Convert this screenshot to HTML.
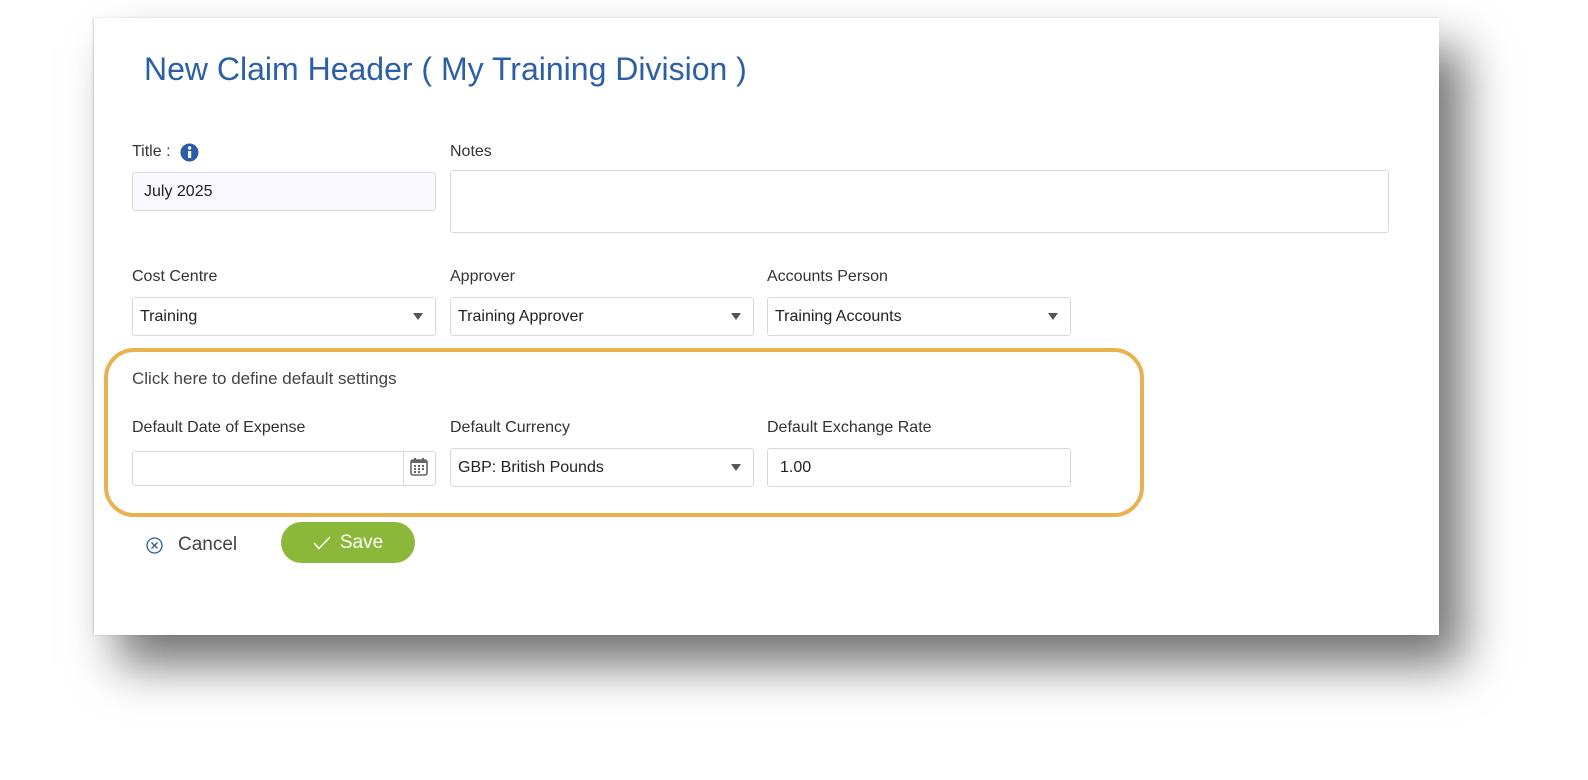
<!DOCTYPE html>
<html style="overflow:hidden"><head><meta charset="utf-8"><style>
body{margin:0;width:1588px;height:780px;background:#fff;font-family:"Liberation Sans",sans-serif;position:relative;overflow:hidden}
.panel{position:absolute;left:94px;top:18px;width:1345px;height:617px;background:#fff;box-shadow:24px 30px 45px rgba(0,0,0,0.55),-1px 0 2px rgba(0,0,0,0.15)}
.a{position:absolute}
h1{position:absolute;left:144px;top:51px;margin:0;font-weight:normal;font-size:32px;color:#2b5fa6}
.lbl{position:absolute;font-size:16px;color:#333}
.in{position:absolute;box-sizing:border-box;border:1px solid #d9d9d9;border-radius:3px;background:#fff;font-size:16px;color:#222;padding-left:7px;display:flex;align-items:center}
.sel::after{content:"";position:absolute;right:12px;top:15px;border-left:5px solid transparent;border-right:5px solid transparent;border-top:7px solid #555}
</style></head><body>
<div class="panel"></div>
<h1>New Claim Header ( My Training Division )</h1>
<div class="lbl" style="left:132px;top:143px">Title :</div>
<svg class="a" style="left:180px;top:143px" width="19" height="19" viewBox="0 0 19 19"><circle cx="9.5" cy="9.5" r="9" fill="#2a5ca8"/><rect x="8" y="8" width="3.2" height="7" fill="#fff"/><circle cx="9.6" cy="5" r="1.7" fill="#fff"/></svg>
<div class="in" style="left:132px;top:172px;width:304px;height:39px;background:#f8f8fe;padding-left:11px">July 2025</div>
<div class="lbl" style="left:450px;top:143px">Notes</div>
<div class="in" style="left:450px;top:170px;width:939px;height:63px"></div>
<div class="lbl" style="left:132px;top:268px">Cost Centre</div>
<div class="lbl" style="left:450px;top:268px">Approver</div>
<div class="lbl" style="left:767px;top:268px">Accounts Person</div>
<div class="in sel" style="left:132px;top:297px;width:304px;height:39px">Training</div>
<div class="in sel" style="left:450px;top:297px;width:304px;height:39px">Training Approver</div>
<div class="in sel" style="left:767px;top:297px;width:304px;height:39px">Training Accounts</div>
<div class="a" style="left:104px;top:348px;width:1040px;height:169px;box-sizing:border-box;border:4px solid #e9b24f;border-radius:30px"></div>
<div class="lbl" style="left:132px;top:369px;font-size:17px;color:#444">Click here to define default settings</div>
<div class="lbl" style="left:132px;top:419px">Default Date of Expense</div>
<div class="lbl" style="left:450px;top:419px">Default Currency</div>
<div class="lbl" style="left:767px;top:419px">Default Exchange Rate</div>
<div class="in" style="left:132px;top:451px;width:304px;height:35px"></div>
<div class="a" style="left:403px;top:452px;width:1px;height:33px;background:#ddd"></div>
<svg class="a" style="left:410px;top:457px" width="18" height="19" viewBox="0 0 18 19"><rect x="1" y="3" width="16" height="15" rx="2" fill="none" stroke="#666" stroke-width="1.6"/><rect x="1" y="3" width="16" height="3" fill="#666"/><g fill="#666"><rect x="4" y="8" width="2" height="2"/><rect x="8" y="8" width="2" height="2"/><rect x="12" y="8" width="2" height="2"/><rect x="4" y="11" width="2" height="2"/><rect x="8" y="11" width="2" height="2"/><rect x="12" y="11" width="2" height="2"/><rect x="4" y="14" width="2" height="2"/><rect x="8" y="14" width="2" height="2"/></g><rect x="4" y="1" width="2" height="3" fill="#666"/><rect x="12" y="1" width="2" height="3" fill="#666"/></svg>
<div class="in sel" style="left:450px;top:448px;width:304px;height:39px">GBP: British Pounds</div>
<div class="in" style="left:767px;top:448px;width:304px;height:39px;padding-left:12px">1.00</div>
<svg class="a" style="left:146px;top:537px" width="17" height="17" viewBox="0 0 17 17"><circle cx="8.5" cy="8.5" r="7.5" fill="none" stroke="#2a5ca8" stroke-width="1.3"/><path d="M5.5 5.5L11.5 11.5M11.5 5.5L5.5 11.5" stroke="#2a5ca8" stroke-width="1.3"/></svg>
<div class="lbl" style="left:178px;top:534px;font-size:19px;color:#444">Cancel</div>
<div class="a" style="left:281px;top:522px;width:134px;height:41px;border-radius:21px;background:#8cb83a;color:#fff;font-size:19px;display:flex;align-items:center;justify-content:center;gap:9px"><svg width="18" height="14" viewBox="0 0 18 14"><path d="M1 7L6 12.5L17 1" fill="none" stroke="#fff" stroke-width="1.5"/></svg>Save</div>
</body></html>
